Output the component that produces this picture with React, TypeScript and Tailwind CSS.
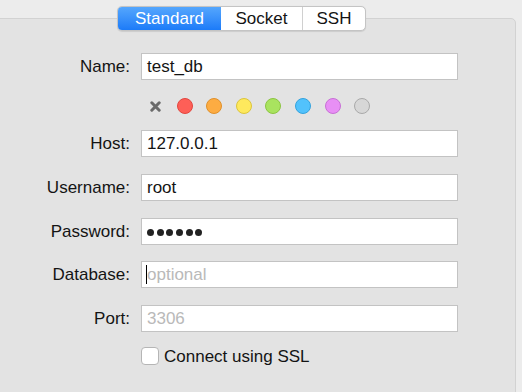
import React from "react";

const font = { fontFamily: '"Liberation Sans", Arial, sans-serif' };

function Field({ label, children }: { label: string; children: React.ReactNode }) {
  return (
    <div className="flex items-center h-[27px]">
      <div className="w-[131px] text-right pr-[1px] text-[17px] text-[#141414] leading-none">{label}</div>
      <div className="ml-[10px] w-[317px] h-[27px] bg-white border border-[#c3c3c3] flex items-center pl-[5px] text-[17px] text-[#141414] leading-none">
        {children}
      </div>
    </div>
  );
}

const dots = [
  ["#fe5f57", "#e2463f"],
  ["#fdac42", "#e0902a"],
  ["#fee95d", "#dcc53b"],
  ["#a9e35f", "#8cc541"],
  ["#52c2fc", "#33a3de"],
  ["#e88ff5", "#c870d6"],
  ["#d7d7d7", "#a9a9a9"],
];

export default function App() {
  return (
    <div className="w-[522px] h-[392px] bg-[#ececec] pt-[18px] overflow-hidden" style={font}>
      <div className="ml-[-10px] w-[526px] h-[400px] bg-[#e3e3e3] border border-[#d2d2d2] rounded-[5px]">
        <div className="flex -mt-[13px] pl-[126px]">
          <div className="flex h-[25px] rounded-[5px] border border-[#c4c4c4] bg-white overflow-hidden text-[17px] leading-none shadow-[0_0.5px_1px_rgba(0,0,0,0.1)]">
            <div className="w-[103px] flex items-center justify-center text-white bg-gradient-to-b from-[#54a6fd] to-[#1b7bf8]">Standard</div>
            <div className="w-[82px] flex items-center justify-center text-[#141414] border-r border-[#d0d0d0]">Socket</div>
            <div className="w-[62px] flex items-center justify-center text-[#141414]">SSH</div>
          </div>
        </div>
        <div className="pl-[9px] mt-[22px] flex flex-col">
          <Field label="Name:">test_db</Field>
          <div className="flex items-center h-[16px] mt-[18px] ml-[150px] gap-[13.6px]">
            <svg width="11" height="11" viewBox="0 0 11 11" className="mr-[2px]">
              <path d="M1.8 1.8 L9.2 9.2 M9.2 1.8 L1.8 9.2" stroke="#6b6b6b" strokeWidth="3" strokeLinecap="round" />
            </svg>
            {dots.map(([bg, bd], i) => (
              <div key={i} className="w-[16px] h-[16px] rounded-full border" style={{ background: bg, borderColor: bd }} />
            ))}
          </div>
          <div className="mt-[16px]">
            <Field label="Host:">127.0.0.1</Field>
          </div>
          <div className="mt-[17px]">
            <Field label="Username:">root</Field>
          </div>
          <div className="mt-[17px]">
            <Field label="Password:">
              <div className="flex gap-[2.7px] pt-[1px]">
                {[0, 1, 2, 3, 4, 5].map((i) => (
                  <div key={i} className="w-[7px] h-[7px] rounded-full bg-[#222]" />
                ))}
              </div>
            </Field>
          </div>
          <div className="mt-[16px]">
            <Field label="Database:">
              <span className="w-[1px] h-[19px] bg-black -ml-[1px]" />
              <span className="text-[#b9b9b9]">optional</span>
            </Field>
          </div>
          <div className="mt-[17px]">
            <Field label="Port:">
              <span className="text-[#b9b9b9]">3306</span>
            </Field>
          </div>
          <div className="flex items-center mt-[15px] ml-[141px]">
            <div className="w-[18px] h-[18px] rounded-[4px] bg-white border border-[#b5b5b5]" />
            <span className="ml-[5px] text-[17px] text-[#141414] leading-none">Connect using SSL</span>
          </div>
        </div>
      </div>
    </div>
  );
}
